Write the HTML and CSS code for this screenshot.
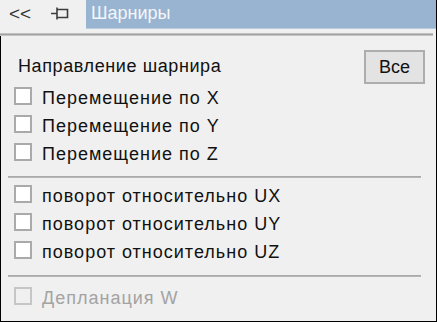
FILE: index.html
```html
<!DOCTYPE html>
<html lang="ru">
<head>
<meta charset="utf-8">
<link rel="stylesheet" href="styles.css">
</head>
<body>
<div class="window">
  <div class="toolbar">
    <div class="tools">
      <span class="collapse">&lt;&lt;</span>
      <svg class="pin" width="20" height="16" viewBox="0 0 20 16">
        <path d="M1 7.5H7M7 1.5V13.5M7 3.5H17.5V11.5H7" fill="none" stroke="#3c3c3c" stroke-width="1.6"/>
      </svg>
    </div>
    <div class="title">Шарниры</div>
  </div>
  <div class="rule"></div>
  <div class="panel">
    <div class="head">
      <span class="head-label">Направление шарнира</span>
      <button class="btn">Все</button>
    </div>
    <div class="group">
      <label class="row"><span class="box"></span><span class="txt">Перемещение по X</span></label>
      <label class="row"><span class="box"></span><span class="txt">Перемещение по Y</span></label>
      <label class="row"><span class="box"></span><span class="txt">Перемещение по Z</span></label>
    </div>
    <div class="sep sep1"></div>
    <div class="group">
      <label class="row"><span class="box"></span><span class="txt">поворот относительно UX</span></label>
      <label class="row"><span class="box"></span><span class="txt">поворот относительно UY</span></label>
      <label class="row"><span class="box"></span><span class="txt">поворот относительно UZ</span></label>
    </div>
    <div class="sep sep2"></div>
    <div class="group">
      <label class="row disabled"><span class="box"></span><span class="txt">Депланация W</span></label>
    </div>
  </div>
</div>
</body>
</html>
```
FILE: styles.css
```css
html, body {
  margin: 0;
  padding: 0;
  background: #f0f0f0;
}
body {
  width: 437px;
  height: 322px;
  overflow: hidden;
  font-family: "Liberation Sans", Arial, sans-serif;
  font-size: 18px;
  color: #111;
}
.window {
  box-sizing: border-box;
  width: 437px;
  height: 322px;
  border-right: 1px solid #000;
  display: flex;
  flex-direction: column;
}
.toolbar {
  display: flex;
  height: 29px;
  flex: none;
}
.tools {
  width: 86px;
  display: flex;
  align-items: center;
}
.collapse {
  font-size: 19px;
  color: #333;
  margin-left: 9px;
  letter-spacing: 0px;
  line-height: 1;
  margin-top: -3px;
}
.pin {
  margin-left: 19px;
  margin-top: -2px;
}
.title {
  flex: 1;
  background: #99b4d1;
  border-bottom: 1px solid #b8cce0;
  color: #f4f6f9;
  padding-left: 5px;
  line-height: 27px;
  font-size: 18px;
}
.rule {
  flex: none;
  margin-top: 4px;
  margin-right: 3px;
  height: 3px;
  background: linear-gradient(#cfcfcf, #a3a3a3 50%, #d4d4d4);
}
.panel {
  flex: 1;
  border-left: 1px solid #000;
  border-bottom: 1px solid #000;
  padding-left: 7px;
}
.head {
  display: flex;
  justify-content: space-between;
  align-items: center;
  margin-top: 13px;
  height: 33px;
  padding-left: 10px;
  padding-right: 11px;
}
.head-label {
  letter-spacing: 0.6px;
  margin-top: 2px;
}
.btn {
  box-sizing: border-box;
  width: 61px;
  height: 34px;
  margin-top: 1px;
  align-self: flex-start;
  background: #e3e3e3;
  border: 2px solid #adadad;
  font-family: "Liberation Sans", Arial, sans-serif;
  font-size: 18px;
  color: #111;
  padding: 0;
}
.row {
  display: flex;
  align-items: center;
  height: 28px;
  padding-left: 6px;
}
.txt {
  letter-spacing: 1px;
  padding-top: 4px;
}
.box {
  box-sizing: border-box;
  width: 18px;
  height: 18px;
  border: 2px solid #aaaaaa;
  background: #fff;
  margin-right: 10px;
  flex: none;
}
.sep {
  height: 2px;
  margin-right: 15px;
  background: linear-gradient(#a4a4a4, #bdbdbd);
}
.sep1 {
  margin-top: 10px;
  margin-bottom: 2px;
}
.sep2 {
  margin-top: 11px;
  margin-bottom: 5px;
}
.disabled {
  color: #a3a3a3;
}
.disabled .box {
  background: #f0f0f0;
  border-color: #c6c6c6;
}
```
